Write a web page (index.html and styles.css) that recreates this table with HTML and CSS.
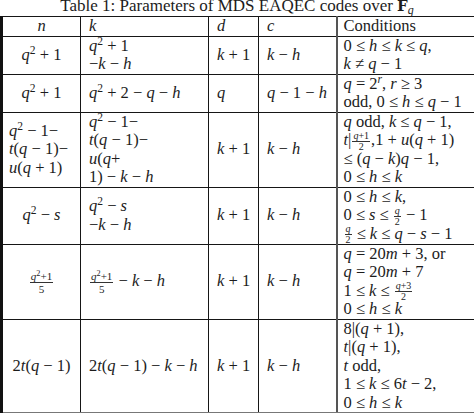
FILE: index.html
```html
<!DOCTYPE html>
<html>
<head>
<meta charset="utf-8">
<link rel="stylesheet" href="styles.css">
</head>
<body>
<div class="caption">Table 1: Parameters of MDS EAQEC codes over <b class="field">F</b><sub><i>q</i></sub></div>
<table class="params">
  <colgroup>
    <col class="c-n"><col class="c-k"><col class="c-d"><col class="c-c"><col class="c-cond">
  </colgroup>
  <tr class="r1">
    <td class="center"><i>n</i></td>
    <td><i>k</i></td>
    <td><i>d</i></td>
    <td><i>c</i></td>
    <td class="cond">Conditions</td>
  </tr>
  <tr class="r2">
    <td class="center"><i>q</i><sup>2</sup> + 1</td>
    <td><i>q</i><sup>2</sup> + 1<br>−<i>k</i> − <i>h</i></td>
    <td><i>k</i> + 1</td>
    <td><i>k</i> − <i>h</i></td>
    <td class="cond">0 ≤ <i>h</i> ≤ <i>k</i> ≤ <i>q</i>,<br><i>k</i> ≠ <i>q</i> − 1</td>
  </tr>
  <tr class="r2">
    <td class="center"><i>q</i><sup>2</sup> + 1</td>
    <td><i>q</i><sup>2</sup> + 2 − <i>q</i> − <i>h</i></td>
    <td><i>q</i></td>
    <td><i>q</i> − 1 − <i>h</i></td>
    <td class="cond"><i>q</i> = 2<sup><i>r</i></sup>, <i>r</i> ≥ 3<br>odd, 0 ≤ <i>h</i> ≤ <i>q</i> − 1</td>
  </tr>
  <tr class="r4">
    <td class="ntight"><i>q</i><sup>2</sup> − 1−<br><i>t</i>(<i>q</i> − 1)−<br><i>u</i>(<i>q</i> + 1)</td>
    <td><i>q</i><sup>2</sup> − 1−<br><i>t</i>(<i>q</i> − 1)−<br><i>u</i>(<i>q</i>+<br>1) − <i>k</i> − <i>h</i></td>
    <td><i>k</i> + 1</td>
    <td><i>k</i> − <i>h</i></td>
    <td class="cond"><i>q</i> odd, <i>k</i> ≤ <i>q</i> − 1,<br><i>t</i>|<span class="frac"><span class="num"><i>q</i>+1</span><span class="den">2</span></span>,1 + <i>u</i>(<i>q</i> + 1)<br>≤ (<i>q</i> − <i>k</i>)<i>q</i> − 1,<br>0 ≤ <i>h</i> ≤ <i>k</i></td>
  </tr>
  <tr class="r3">
    <td class="center"><i>q</i><sup>2</sup> − <i>s</i></td>
    <td><i>q</i><sup>2</sup> − <i>s</i><br>−<i>k</i> − <i>h</i></td>
    <td><i>k</i> + 1</td>
    <td><i>k</i> − <i>h</i></td>
    <td class="cond">0 ≤ <i>h</i> ≤ <i>k</i>,<br>0 ≤ <i>s</i> ≤ <span class="frac"><span class="num"><i>q</i></span><span class="den">2</span></span> − 1<br><span class="frac"><span class="num"><i>q</i></span><span class="den">2</span></span> ≤ <i>k</i> ≤ <i>q</i> − <i>s</i> − 1</td>
  </tr>
  <tr class="r4">
    <td class="center"><span class="frac big"><span class="num"><i>q</i><sup>2</sup>+1</span><span class="den">5</span></span></td>
    <td><span class="frac big"><span class="num"><i>q</i><sup>2</sup>+1</span><span class="den">5</span></span> − <i>k</i> − <i>h</i></td>
    <td><i>k</i> + 1</td>
    <td><i>k</i> − <i>h</i></td>
    <td class="cond"><i>q</i> = 20<i>m</i> + 3, or<br><i>q</i> = 20<i>m</i> + 7<br>1 ≤ <i>k</i> ≤ <span class="frac"><span class="num"><i>q</i>+3</span><span class="den">2</span></span><br>0 ≤ <i>h</i> ≤ <i>k</i></td>
  </tr>
  <tr class="r5 last">
    <td class="center">2<i>t</i>(<i>q</i> − 1)</td>
    <td>2<i>t</i>(<i>q</i> − 1) − <i>k</i> − <i>h</i></td>
    <td><i>k</i> + 1</td>
    <td><i>k</i> − <i>h</i></td>
    <td class="cond">8|(<i>q</i> + 1),<br><i>t</i>|(<i>q</i> + 1),<br><i>t</i> odd,<br>1 ≤ <i>k</i> ≤ 6<i>t</i> − 2,<br>0 ≤ <i>h</i> ≤ <i>k</i></td>
  </tr>
</table>
</body>
</html>
```
FILE: styles.css
```css
html, body {
  margin: 0;
  padding: 0;
  background: #ffffff;
}
body {
  font-family: "Liberation Serif", "Times New Roman", serif;
  font-size: 16.5px;
  color: #1c1c1c;
  width: 474px;
  height: 413px;
  overflow: hidden;
}
.caption {
  width: 474px;
  height: 16px;
  line-height: 12px;
  font-size: 17px;
  text-align: center;
  white-space: nowrap;
}
.caption .field {
  font-family: "DejaVu Serif", "Liberation Serif", serif;
  font-size: 15px;
}
.caption sub {
  font-size: 0.7em;
  line-height: 0;
  vertical-align: -0.25em;
}
.params {
  border-collapse: collapse;
  table-layout: fixed;
  width: 473px;
}
.c-n { width: 79px; }
.c-k { width: 128px; }
.c-d { width: 50px; }
.c-c { width: 78px; }
.c-cond { width: 138px; }
.params td {
  border: 1px solid #161616;
  padding: 0 6px 0 8px;
  line-height: 18.5px;
  vertical-align: middle;
  text-align: left;
  white-space: nowrap;
}
.params td:first-child {
  border-left: 3px solid #111;
}
.params td.cond {
  border-left: 2px solid #555;
  border-right: 2px solid #6a6a6a;
  padding-left: 6px;
}
.params td.center {
  text-align: center;
  padding: 0 4px;
}
.params td.ntight {
  padding-left: 6px;
}
.params tr.last td {
  border-bottom: 2px solid #777;
}
.r1 { height: 19px; }
.r2 { height: 38px; }
.r3 { height: 57px; }
.r4 { height: 75px; }
.r5 { height: 93px; }
i {
  font-style: italic;
}
sup {
  font-size: 0.7em;
  line-height: 0;
  vertical-align: 0.5em;
}
.frac {
  display: inline-flex;
  flex-direction: column;
  align-items: center;
  font-size: 10px;
  line-height: 8px;
  vertical-align: middle;
  margin: -3px 1px;
}
.frac.big {
  font-size: 11px;
  line-height: 10px;
}
.frac .num {
  border-bottom: 1px solid #333;
  padding: 0 1px 1px;
}
.frac .den {
  padding-top: 1px;
}
.frac sup {
  font-size: 0.75em;
  vertical-align: 0.45em;
}
```
